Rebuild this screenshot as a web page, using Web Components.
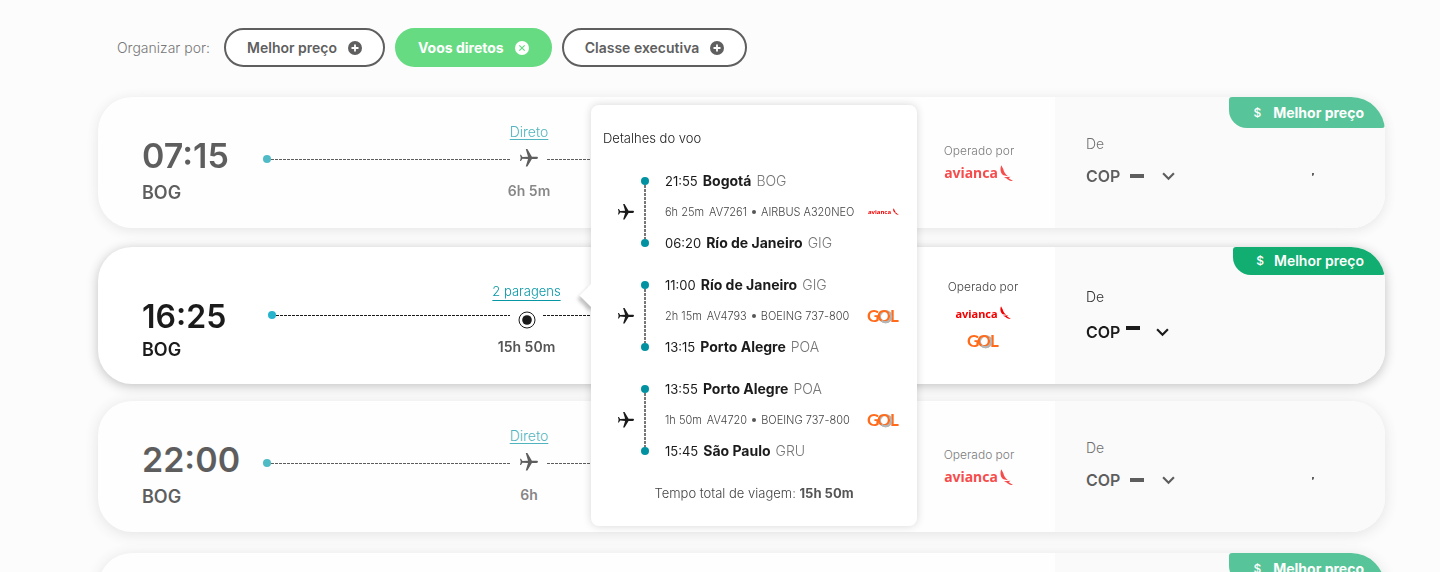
<!DOCTYPE html>
<html lang="pt">
<head>
<meta charset="utf-8">
<title>Resultados de voos</title>
<style>
  html, body { margin: 0; height: 100%; }
  body {
    background: #fcfcfc;
    color: #1b1b1b;
    font-family: Inter, "Liberation Sans", sans-serif;
    font-size: 14px;
    line-height: 20px;
    overflow: hidden;
  }
</style>
</head>
<body>
<flight-results>
  <sort-bar slot="sort" label="Organizar por:">
    <sort-pill>Melhor preço</sort-pill>
    <sort-pill selected>Voos diretos</sort-pill>
    <sort-pill>Classe executiva</sort-pill>
  </sort-bar>

  <flight-card time="07:15" airport="BOG" stops="Direto" duration="6h 5m" carriers="avianca" best mark></flight-card>

  <flight-card time="16:25" airport="BOG" stops="2 paragens" duration="15h 50m" carriers="avianca gol" best active>
    <flight-details slot="details" heading="Detalhes do voo" total="15h 50m">
      <flight-leg depart="21:55" from="Bogotá" from-code="BOG" length="6h 25m" number="AV7261" plane="AIRBUS A320NEO" arrive="06:20" to="Río de Janeiro" to-code="GIG" carrier="avianca"></flight-leg>
      <flight-leg depart="11:00" from="Río de Janeiro" from-code="GIG" length="2h 15m" number="AV4793" plane="BOEING 737-800" arrive="13:15" to="Porto Alegre" to-code="POA" carrier="gol"></flight-leg>
      <flight-leg depart="13:55" from="Porto Alegre" from-code="POA" length="1h 50m" number="AV4720" plane="BOEING 737-800" arrive="15:45" to="São Paulo" to-code="GRU" carrier="gol"></flight-leg>
    </flight-details>
  </flight-card>

  <flight-card time="22:00" airport="BOG" stops="Direto" duration="6h" carriers="avianca" mark></flight-card>

  <flight-card best></flight-card>
</flight-results>

<script>
const attach = (el, html) => { el.attachShadow({ mode: 'open' }).innerHTML = html; };

customElements.define('flight-results', class extends HTMLElement {
  connectedCallback() {
    attach(this, `
      <style>
        :host { display: block; padding: 28px 55px 0 98px; }
        .list { display: flex; flex-direction: column; gap: 21px; margin-top: 30px; }
      </style>
      <slot name="sort"></slot>
      <main class="list"><slot></slot></main>`);
  }
});

customElements.define('sort-bar', class extends HTMLElement {
  connectedCallback() {
    attach(this, `
      <style>
        :host { display: flex; align-items: center; gap: 10px; padding-left: 19px; }
        .label { margin-right: 4px; font-weight: 300; color: #777; }
      </style>
      <span class="label">${this.getAttribute('label')}</span>
      <slot></slot>`);
  }
});

customElements.define('sort-pill', class extends HTMLElement {
  connectedCallback() {
    const on = this.hasAttribute('selected');
    attach(this, `
      <style>
        :host { display: block; }
        button {
          display: flex; align-items: center; gap: 11px;
          box-sizing: border-box; height: 39px; padding: 0 21px;
          border: 2px solid #5f5f5f; border-radius: 20px;
          background: #fff; color: #5f5f5f;
          font: 600 14px/20px Inter, "Liberation Sans", sans-serif;
          white-space: nowrap; cursor: pointer;
        }
        button[aria-pressed="true"] { background: #66db82; border-color: #66db82; color: #fff; font-weight: 700; }
        svg { display: block; width: 14px; height: 14px; }
      </style>
      <button type="button" aria-pressed="${on}"><slot></slot>
        <svg viewBox="0 0 14 14" aria-hidden="true">
          <circle cx="7" cy="7" r="7" fill="${on ? '#fff' : '#5f5f5f'}"/>
          ${on
            ? '<path d="M4.3 4.3l5.4 5.4M9.7 4.3L4.3 9.7" stroke="#66db82" stroke-width="1.2"/>'
            : '<path d="M7 3.5v7M3.5 7h7" stroke="#fff" stroke-width="1.8"/>'}
        </svg>
      </button>`);
  }
});

customElements.define('plane-icon', class extends HTMLElement {
  connectedCallback() {
    attach(this, `
      <style>
        :host { display: block; width: 18px; height: 18px; }
        svg { display: block; width: 100%; height: 100%; }
      </style>
      <svg viewBox="2 2 20 20" aria-hidden="true"><path transform="rotate(90 12 12)" fill="currentColor" d="M21.5 15.6v-1.8L13.1 8.8V3.6c0-.9-.5-1.6-1.3-1.6s-1.3.7-1.3 1.6v5.2L2 13.8v1.8l8.5-2.5 .4 6.2-2.5 1.6V22l3.4-.8 3.4.8v-1.1l-2.5-1.6.4-6.2z"/></svg>`);
  }
});

customElements.define('carrier-logo', class extends HTMLElement {
  connectedCallback() {
    const avianca = `
      <style>
        :host { display: inline-flex; align-items: center; gap: 2px; color: #f50000; }
        span { font: 700 1em/1 "Noto Sans", sans-serif; }
        svg { display: block; width: 1em; height: 1.2em; }
      </style>
      <span>avianca</span>
      <svg viewBox="0 0 14 17" aria-hidden="true" fill="currentColor">
        <path d="M1.2.3C-.3 3.800.2 8.200 3.400 10.500L8 11.400C5 9 3.800 6.500 3.300 4.200Z"/>
        <path d="M3.800 12.500L10.500 11.900 8.700 13.300 14 16.800C10 16.300 8 15 6.600 13.700Z"/>
      </svg>`;
    const gol = `
      <style>
        :host { display: inline-block; }
        svg { display: block; width: 32px; height: 15px; overflow: visible; }
        text { font: 700 17px Lato, sans-serif; fill: #ff6b1a; }
      </style>
      <svg viewBox="0 0 32 15" role="img" aria-label="GOL">
        <circle cx="18.500" cy="7.600" r="5.600" fill="none" stroke="#b5b5b5" stroke-width="2.200"/>
        <text y="13.300"><tspan x="0">G</tspan><tspan x="10">O</tspan><tspan x="23">L</tspan></text>
        <path d="M22.600 3.700A5.600 5.600 0 0 1 14.500 11.500" fill="none" stroke="#b5b5b5" stroke-width="2.200"/>
      </svg>`;
    attach(this, this.getAttribute('name') === 'gol' ? gol : avianca);
  }
});

customElements.define('flight-card', class extends HTMLElement {
  connectedCallback() {
    const a = n => this.getAttribute(n) || '';
    const active = this.hasAttribute('active');
    const stopIcon = active
      ? '<svg class="stop-icon" viewBox="0 0 18 18" aria-hidden="true"><circle cx="9" cy="9" r="8" fill="none" stroke="#1b1b1b" stroke-width="1"/><circle cx="9" cy="9" r="4.800" fill="#1b1b1b"/></svg>'
      : '<plane-icon class="stop-icon"></plane-icon>';
    const body = !a('time') ? '<div class="route"></div>' : `
      <div class="origin"><div class="time">${a('time')}</div><div class="airport">${a('airport')}</div></div>
      <div class="route">
        <div class="track"><i class="dot"></i><i class="dash"></i></div>
        <div class="stop">
          <a href="#detalhes">${a('stops')}</a>
          ${stopIcon}
          <div class="duration">${a('duration')}</div>
          <slot name="details"></slot>
        </div>
        <div class="track"><i class="dash"></i></div>
      </div>
      <div class="operator">
        <span class="by">Operado por</span>
        ${a('carriers').split(' ').map(c => `<carrier-logo name="${c}"></carrier-logo>`).join('')}
      </div>`;
    const price = !a('time') ? '' : `
      <div class="from">De</div>
      <button type="button" class="fare">COP <i class="amount"></i>
        <svg viewBox="0 0 12 8" aria-hidden="true"><path d="M1 1l5 5 5-5" fill="none" stroke="currentColor" stroke-width="2"/></svg>
      </button>
      ${this.hasAttribute('mark') ? '<i class="mark"></i>' : ''}`;
    attach(this, `
      <style>
        :host {
          --origin: 121px; --gap-end: 108px; --stop: 36px;
          display: flex; min-height: 131px; border-radius: 34px;
          background: #fff; opacity: .7;
          box-shadow: 0 2px 14px rgba(0,0,0,.14);
        }
        :host([active]) {
          --origin: 126px; --gap-end: 118px; --stop: 33px;
          position: relative; z-index: 1; opacity: 1;
          min-height: 137px; margin: -2px 0 -4px;
          box-shadow: 0 2px 12px rgba(0,0,0,.24);
        }
        i { display: block; }
        .origin { flex: none; width: var(--origin); padding: 39px 0 0 44px; }
        .time { font-size: 34px; line-height: 40px; font-weight: 600; }
        .airport { margin-top: 5px; font-size: 18px; line-height: 24px; font-weight: 600; }
        .route { flex: 1; display: grid; grid-template-columns: 1fr var(--stop) 1fr; margin-right: var(--gap-end); }
        .track { display: flex; align-items: center; height: 8px; margin-top: 58px; }
        .dot { flex: none; width: 8px; height: 8px; border-radius: 50%; background: #07a0af; }
        .dash { flex: 1; height: 1px; background: repeating-linear-gradient(90deg, #1b1b1b 0 3px, transparent 3px 4px); }
        .stop { position: relative; display: flex; flex-direction: column; align-items: center; padding-top: 25px; white-space: nowrap; }
        .stop a { color: #0797a5; font-weight: 300; text-underline-offset: 2px; }
        .stop-icon { flex: none; width: 18px; height: 18px; margin: 7px 0 14px; }
        .duration { font-weight: 600; color: #555; }
        ::slotted(flight-details) { position: absolute; left: calc(100% + 48px); top: -142px; }
        .operator { flex: none; box-sizing: border-box; width: 152px; display: flex; flex-direction: column; align-items: center; padding-top: 44px; }
        .by { font-size: 12px; font-weight: 300; color: #444; }
        carrier-logo { font-size: 14px; height: 18px; margin-top: 3px; }
        .price {
          flex: none; box-sizing: border-box; position: relative; overflow: hidden;
          width: 330px; padding: 37px 0 0 31px;
          border-radius: 0 34px 34px 0; background: #fafafa;
        }
        .from { font-weight: 300; color: #333; }
        .fare {
          display: flex; align-items: center; gap: 10px; height: 24px; margin-top: 10px; padding: 0;
          border: 0; background: none; color: #1b1b1b;
          font: 600 16px/24px Inter, "Liberation Sans", sans-serif; cursor: pointer;
        }
        .amount { width: 14px; height: 4px; background: currentColor; }
        .fare svg { width: 13px; height: 9px; margin-left: 8px; }
        .mark { position: absolute; left: 257px; top: 76px; width: 2px; height: 3px; background: #1b1b1b; border-radius: 0 0 2px 0; }
        .best {
          position: absolute; top: 0; right: 0; display: flex; align-items: center; gap: 12px;
          height: 31px; padding: 0 21px 0 24px;
          border-radius: 3px 0 3px 18px; background: #12ad70; color: #fff; font-weight: 700;
        }
        .best span { font-size: 12px; font-weight: 500; }

        :host([active]) .origin { padding-top: 50px; }
        :host([active]) .time { font-size: 32px; }
        :host([active]) .airport { margin-top: 1px; }
        :host([active]) .track { margin-top: 64px; }
        :host([active]) .dot { background: #27b3cc; }
        :host([active]) .stop { padding-top: 34px; }
        :host([active]) .stop a { font-size: 13px; text-underline-offset: 4px; }
        :host([active]) .stop-icon { margin: 10px 0 8px; }
        :host([active]) .operator { padding: 30px 0 0 8px; }
        :host([active]) .by { margin-bottom: 4px; }
        :host([active]) carrier-logo { font-size: 11px; margin: 3px 0 9px; }
        :host([active]) .price { padding-top: 40px; background: #fafafa; }
        :host([active]) .fare { margin-top: 13px; gap: 6px; }
        :host([active]) .amount { margin-bottom: 8px; }
        :host([active]) .fare svg { margin-left: 10px; }
        :host([active]) .best { height: 28px; padding-left: 23px; gap: 10px; font-weight: 600; }
      </style>
      ${body}
      <div class="price">
        ${this.hasAttribute('best') ? '<div class="best"><span>$</span>Melhor preço</div>' : ''}
        ${price}
      </div>`);
  }
});

customElements.define('flight-details', class extends HTMLElement {
  connectedCallback() {
    attach(this, `
      <style>
        :host {
          display: block; box-sizing: border-box; width: 326px; padding: 23px 0;
          border-radius: 8px; background: #fff; box-shadow: 0 0 8px rgba(0,0,0,.16);
          white-space: nowrap;
        }
        :host::before {
          content: ""; position: absolute; left: -8px; top: 182px; width: 17px; height: 17px;
          background: #fff; transform: rotate(45deg); box-shadow: 1px 4px 4px rgba(0,0,0,.24);
        }
        .cover { position: absolute; left: 0; top: 170px; width: 20px; height: 40px; background: #fff; }
        h2 { margin: 0 12px 23px; font-size: 13px; line-height: 20px; font-weight: 300; color: #1b1b1b; }
        .legs { position: relative; display: flex; flex-direction: column; gap: 22px; padding: 0 18px 0 27px; }
        p { margin: 22px 0 0; text-align: center; font-size: 13px; font-weight: 300; color: #444; }
        b { font-weight: 700; color: #555; }
      </style>
      <div class="cover"></div>
      <h2>${this.getAttribute('heading')}</h2>
      <div class="legs"><slot></slot></div>
      <p>Tempo total de viagem: <b>${this.getAttribute('total')}</b></p>`);
  }
});

customElements.define('flight-leg', class extends HTMLElement {
  connectedCallback() {
    const a = n => this.getAttribute(n);
    const point = (time, city, code) => `<div class="point"><span>${time}</span><b>${city}</b><span class="code">${code}</span></div>`;
    attach(this, `
      <style>
        :host { display: grid; grid-template-columns: 16px 8px 1fr; align-items: center; color: #1b1b1b; }
        plane-icon { width: 16px; height: 16px; }
        .track { display: flex; flex-direction: column; align-items: center; align-self: stretch; margin: 6px -7px 6px 7px; }
        .track i { width: 8px; height: 8px; border-radius: 50%; background: #0092a0; }
        .track span { flex: 1; width: 2px; background: repeating-linear-gradient(#777 0 3px, transparent 3px 4px); }
        .rows { display: flex; flex-direction: column; gap: 11px; padding-left: 23px; }
        .point, .info { display: flex; align-items: center; gap: 5px; height: 20px; }
        .point span { font-size: 13px; }
        b { font-size: 14px; font-weight: 700; }
        .point .code { font-size: 14px; font-weight: 300; color: #777; }
        .info { font-size: 11px; font-weight: 300; color: #444; }
        .info i { width: 4px; height: 4px; border-radius: 50%; background: #555; }
        carrier-logo { margin-left: auto; font-size: 6px; }
      </style>
      <plane-icon></plane-icon>
      <div class="track"><i></i><span></span><i></i></div>
      <div class="rows">
        ${point(a('depart'), a('from'), a('from-code'))}
        <div class="info"><span>${a('length')}</span><span>${a('number')}</span><i></i><span>${a('plane')}</span><carrier-logo name="${a('carrier')}"></carrier-logo></div>
        ${point(a('arrive'), a('to'), a('to-code'))}
      </div>`);
  }
});
</script>
</body>
</html>
